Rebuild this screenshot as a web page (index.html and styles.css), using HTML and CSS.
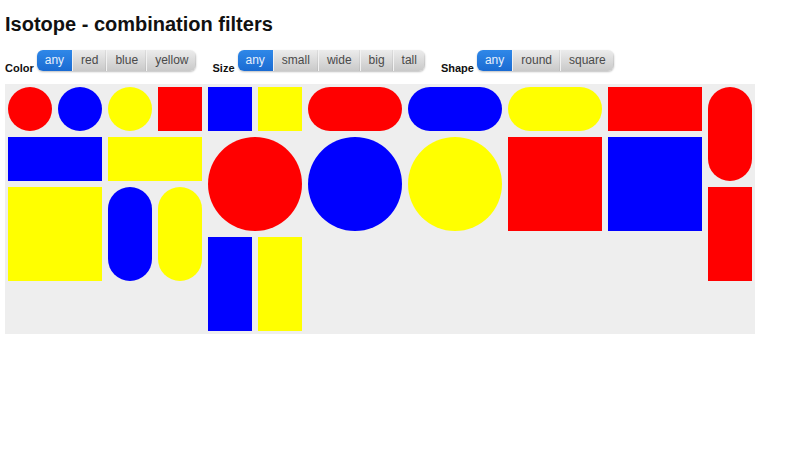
FILE: index.html
```html
<!DOCTYPE html>
<html lang="en">
<head>
<meta charset="utf-8">
<title>Isotope - combination filters</title>
<link rel="stylesheet" href="styles.css">
</head>
<body>
<h1 class="title">Isotope - combination filters</h1>
<div class="filters">
  <div class="combo">
    <h2 class="combo-label">Color</h2>
    <div class="option-set">
      <a class="opt selected">any</a><a class="opt">red</a><a class="opt">blue</a><a class="opt">yellow</a>
    </div>
  </div>
  <div class="combo">
    <h2 class="combo-label">Size</h2>
    <div class="option-set">
      <a class="opt selected">any</a><a class="opt">small</a><a class="opt">wide</a><a class="opt">big</a><a class="opt">tall</a>
    </div>
  </div>
  <div class="combo">
    <h2 class="combo-label">Shape</h2>
    <div class="option-set">
      <a class="opt selected">any</a><a class="opt">round</a><a class="opt">square</a>
    </div>
  </div>
</div>
<div class="grid">
  <div class="item small red round"></div>
  <div class="item small blue round"></div>
  <div class="item small yellow round"></div>
  <div class="item small red square"></div>
  <div class="item small blue square"></div>
  <div class="item small yellow square"></div>
  <div class="item wide red round"></div>
  <div class="item wide blue round"></div>
  <div class="item wide yellow round"></div>
  <div class="item wide red square"></div>
  <div class="item wide blue square"></div>
  <div class="item wide yellow square"></div>
  <div class="item big red round"></div>
  <div class="item big blue round"></div>
  <div class="item big yellow round"></div>
  <div class="item big red square"></div>
  <div class="item big blue square"></div>
  <div class="item big yellow square"></div>
  <div class="item tall red round"></div>
  <div class="item tall blue round"></div>
  <div class="item tall yellow round"></div>
  <div class="item tall red square"></div>
  <div class="item tall blue square"></div>
  <div class="item tall yellow square"></div>
</div>
</body>
</html>
```
FILE: styles.css
```css
html, body {
  background: #fff;
}
body {
  margin: 0;
  padding: 5px;
  font-family: "Liberation Sans", Arial, sans-serif;
  color: #111;
}
.title {
  margin: 8px 0 0;
  font-size: 20px;
  line-height: 23px;
  font-weight: bold;
}
.filters {
  display: flex;
  align-items: flex-end;
  margin-top: 14px;
  margin-bottom: 13px;
}
.combo {
  display: flex;
  align-items: flex-end;
  margin-right: 16px;
}
.combo-label {
  margin: 0 3px -3px 0;
  font-size: 11px;
  line-height: 11px;
  font-weight: bold;
  color: #111;
}
.option-set {
  display: flex;
  border-radius: 6px;
  overflow: hidden;
  box-shadow: 0 1px 2px rgba(0, 0, 0, 0.25);
}
.opt {
  display: block;
  padding: 0 8px;
  height: 21px;
  line-height: 21px;
  font-size: 12px;
  color: #4a4a4a;
  background: linear-gradient(#ececec, #c9c9c9);
  border-left: 1px solid #f2f2f2;
  box-shadow: inset -1px 0 0 rgba(0, 0, 0, 0.06);
}
.opt:first-child {
  border-left: none;
}
.opt.selected {
  color: #e6f0fc;
  background: linear-gradient(#2f88e8, #1a6bd2);
  box-shadow: none;
}
.grid {
  display: grid;
  grid-template-columns: repeat(15, 44px);
  grid-auto-rows: 44px;
  grid-auto-flow: dense;
  gap: 6px;
  padding: 3px;
  width: 744px;
  background: #eee;
}
.item.small { grid-column: span 1; grid-row: span 1; }
.item.wide { grid-column: span 2; grid-row: span 1; }
.item.big { grid-column: span 2; grid-row: span 2; }
.item.tall { grid-column: span 1; grid-row: span 2; }
.red { background: #f00; }
.blue { background: #00f; }
.yellow { background: #ff0; }
.round { border-radius: 999px; }
.square { border-radius: 0; }
```
